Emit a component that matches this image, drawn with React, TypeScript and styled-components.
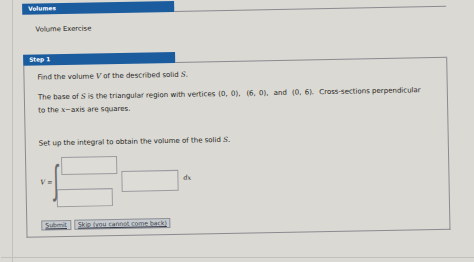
import styled, { createGlobalStyle } from 'styled-components';

const GlobalStyle = createGlobalStyle`
  html, body {
    margin: 0;
    padding: 0;
    background: #dbd9d4;
  }
  body {
    font-family: 'DejaVu Sans', Verdana, sans-serif;
    color: #1f1f22;
    overflow: hidden;
  }
`;

const Page = styled.div`
  width: 462px;
  height: 262px;
  box-sizing: border-box;
  margin-left: 12px;
  border-left: 1px solid #c2c0bb;
  position: relative;
`;

const Sheet = styled.div`
  padding: 4px 28px 0 9px;
  transform: rotate(-1.1deg);
  transform-origin: 0 0;
`;

const HeaderRow = styled.div`
  display: flex;
  align-items: flex-end;
`;

const Tab = styled.div`
  width: 146px;
  height: 11px;
  padding-left: 6px;
  background: #1b5c9f;
  color: #fff;
  font-size: 5.8px;
  font-weight: bold;
  line-height: 11px;
`;

const Rule = styled.div`
  flex: 1;
  border-bottom: 1px solid #8b8a90;
`;

const Intro = styled.div`
  font-size: 6.8px;
  padding: 11px 0 0 13px;
  height: 29px;
`;

const StepBox = styled.div`
  border: 1px solid #8b8a90;
  border-top: none;
  padding: 6px 10px 6px 13px;
  font-size: 7px;
  line-height: 13px;
`;

const Para = styled.p<{ $gap?: number }>`
  margin: 0 0 ${(p) => p.$gap ?? 7}px;
  white-space: nowrap;
`;

const Math = styled.span`
  margin: 0 3px;
  word-spacing: 1px;
`;

const Ital = styled.i`
  font-family: 'DejaVu Serif', serif;
`;

const Integral = styled.div`
  display: flex;
  align-items: center;
  margin: 7px 0 0 1px;
  height: 50px;
`;

const Label = styled.span`
  margin-right: 2px;
  font-size: 6.4px;
`;

const Sign = styled.span`
  font-family: 'DejaVu Sans', sans-serif;
  font-weight: 200;
  font-size: 40px;
  line-height: 44px;
  margin: -6px -5px 0 -4px;
  color: #6a6b70;
  transform: scaleX(0.45);
`;

const Limits = styled.div`
  display: flex;
  flex-direction: column;
  gap: 14px;
`;

const Field = styled.div<{ $w: number; $h: number; $shift?: number }>`
  width: ${(p) => p.$w}px;
  height: ${(p) => p.$h}px;
  border: 1px solid #9c9ba0;
  background: #dedcd7;
  margin-left: ${(p) => p.$shift ?? 0}px;
`;

const Dx = styled.span`
  margin-left: 5px;
  font-family: 'DejaVu Serif', serif;
  font-style: italic;
  font-size: 6.4px;
  position: relative;
  top: -2px;
`;

const Buttons = styled.div`
  display: flex;
  gap: 3px;
  margin: 13px 0 0 1px;
`;

const Btn = styled.button`
  font-family: 'DejaVu Sans', sans-serif;
  font-size: 6.1px;
  height: 10px;
  padding: 0 3px;
  line-height: 8px;
  background: #c6cace;
  border: 1px solid #8e9096;
  color: #353a46;
  text-decoration: underline;
`;

const BottomRule = styled.div`
  position: absolute;
  left: -12px;
  width: 474px;
  top: 257px;
  border-top: 1px solid #c2c0bb;
`;

export default function App() {
  return (
    <>
      <GlobalStyle />
      <Page>
        <Sheet>
          <HeaderRow>
            <Tab>Volumes</Tab>
            <Rule />
          </HeaderRow>
          <Intro>Volume Exercise</Intro>
          <HeaderRow>
            <Tab>Step 1</Tab>
            <Rule />
          </HeaderRow>
          <StepBox>
            <Para $gap={7}>
              Find the volume <Ital>V</Ital> of the described solid <Ital>S</Ital>.
            </Para>
            <Para $gap={20}>
              The base of <Ital>S</Ital> is the triangular region with vertices
              <Math>(0, 0),</Math>
              <Math>(6, 0),</Math> and <Math>(0, 6).</Math> Cross-sections perpendicular
              <br />
              to the <Ital>x</Ital>−axis are squares.
            </Para>
            <Para $gap={0}>
              Set up the integral to obtain the volume of the solid <Ital>S</Ital>.
            </Para>
            <Integral>
              <Label>
                <Ital>V</Ital> =
              </Label>
              <Sign>∫</Sign>
              <Limits>
                <Field $w={54} $h={16} $shift={5} />
                <Field $w={54} $h={16} />
              </Limits>
              <Field $w={55} $h={19} $shift={4} />
              <Dx>dx</Dx>
            </Integral>
            <Buttons>
              <Btn>Submit</Btn>
              <Btn>Skip (you cannot come back)</Btn>
            </Buttons>
          </StepBox>
        </Sheet>
        <BottomRule />
      </Page>
    </>
  );
}
